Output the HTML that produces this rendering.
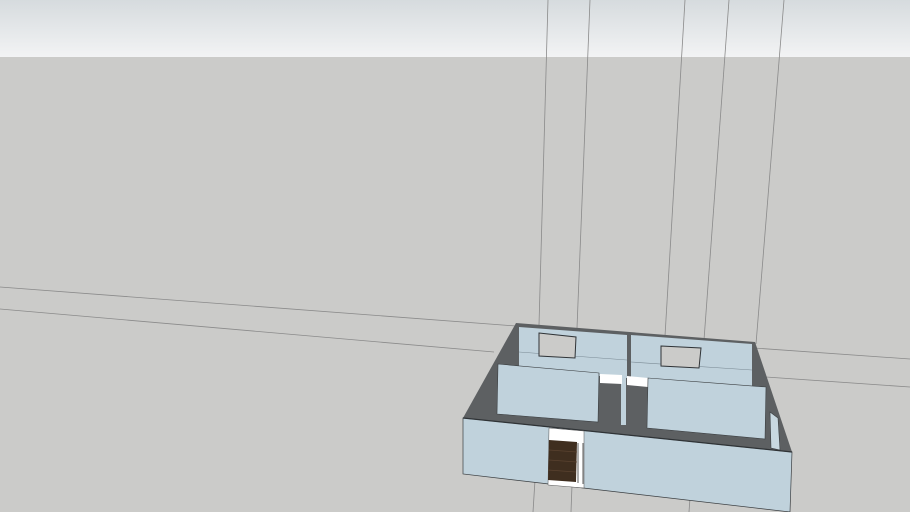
<!DOCTYPE html>
<html><head><style>
html,body{margin:0;padding:0;width:910px;height:512px;overflow:hidden;background:#cbcbc9}
svg{display:block}
</style></head><body>
<svg width="910" height="512" viewBox="0 0 910 512" xmlns="http://www.w3.org/2000/svg">
<defs>
<linearGradient id="sky" x1="0" y1="0" x2="0" y2="1">
<stop offset="0" stop-color="#d6dbde"/><stop offset="1" stop-color="#f2f3f4"/>
</linearGradient>
</defs>
<rect x="0" y="0" width="910" height="57" fill="url(#sky)"/>
<rect x="0" y="57" width="910" height="455" fill="#cbcbc9"/>
<g stroke="#8a8a8a" stroke-width="0.8" fill="none">
<line x1="0" y1="287" x2="516" y2="326"/>
<line x1="754" y1="348" x2="910" y2="359"/>
<line x1="0" y1="309" x2="494" y2="352"/>
<line x1="766" y1="377" x2="910" y2="387"/>
<line x1="548" y1="0" x2="539" y2="325"/>
<line x1="590" y1="0" x2="577" y2="328"/>
<line x1="685" y1="0" x2="665" y2="336"/>
<line x1="729" y1="0" x2="704" y2="340"/>
<line x1="784" y1="0" x2="756" y2="344"/>
<line x1="535" y1="480" x2="533" y2="512"/>
<line x1="572" y1="485" x2="571" y2="512"/>
<line x1="690" y1="498" x2="689" y2="512"/>
</g>
<!-- top rim / floor -->
<polygon points="516,323 755,342 792,452 463,418" fill="#5d6062"/>
<!-- back walls inner faces -->
<polygon points="519,327 627,335 627,378 519,370" fill="#c0d2dc"/>
<polygon points="631,335 752,344 752,386 631,378" fill="#c0d2dc"/>
<line x1="519" y1="352" x2="627" y2="360" stroke="#7a8a94" stroke-width="0.6"/>
<line x1="631" y1="362" x2="752" y2="370" stroke="#7a8a94" stroke-width="0.6"/>
<!-- windows -->
<polygon points="539,333 576,337 575,358 539,356" fill="#cbcbc9" stroke="#2f3336" stroke-width="1"/>
<polygon points="661,346 701,348 699,368 661,366" fill="#cbcbc9" stroke="#2f3336" stroke-width="1"/>
<!-- center column -->
<polygon points="621,375 626,375 626,425 621,425" fill="#c0d2dc"/>
<!-- white openings -->
<polygon points="600,374 622,375 622,384 600,383" fill="#ffffff"/>
<polygon points="627,376 648,378 648,387 627,385" fill="#ffffff"/>
<!-- partitions -->
<polygon points="498,364 599,373 598,422 497,414" fill="#c0d2dc" stroke="#3a3e41" stroke-width="0.6"/>
<polygon points="648,378 766,387 765,439 647,428" fill="#c0d2dc" stroke="#3a3e41" stroke-width="0.6"/>
<!-- right side small window -->
<polygon points="770,412 778,418 780,450 771,448" fill="#c8d8e0" stroke="#3a3e41" stroke-width="0.6"/>
<!-- front wall -->
<polygon points="463,418 792,452 790,512 463,474" fill="#c0d2dc" stroke="#3a3e41" stroke-width="0.7"/>
<line x1="463" y1="418" x2="792" y2="452" stroke="#2f3336" stroke-width="1.2"/>
<!-- door -->
<polygon points="549,428 584,431 584,488 548,485" fill="#ffffff" stroke="#555" stroke-width="0.5"/>
<polygon points="549,440 577,442 576,482 548,480" fill="#3f2e1f"/>
<g stroke="#5a4330" stroke-width="0.8">
<line x1="549" y1="450" x2="577" y2="452"/>
<line x1="549" y1="460" x2="577" y2="462"/>
<line x1="548" y1="470" x2="576" y2="472"/>
</g>
<line x1="578" y1="443" x2="578" y2="483" stroke="#333" stroke-width="0.8"/>
<line x1="583" y1="443" x2="583" y2="484" stroke="#333" stroke-width="0.8"/>
</svg>
</body></html>
